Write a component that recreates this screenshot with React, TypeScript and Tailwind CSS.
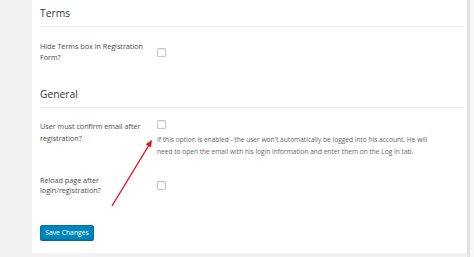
export default function App() {
  return (
    <div
      className="relative flex h-[257px] w-[474px] overflow-hidden bg-[#f1f1f1]"
      style={{ fontFamily: '"Open Sans", "Noto Sans", sans-serif' }}
    >
      <div className="w-[32px] shrink-0" />
      <div className="flex h-[253px] w-[435px] shrink-0 flex-col bg-white pl-[8px] pr-[4px] pt-[6px]">
        <h2 className="text-[10.3px] leading-[14px] text-[#32373c]">Terms</h2>
        <div className="mt-[6px] border-t border-[#e8e8e8]" />

        <div className="mt-[14px] flex">
          <div className="w-[117px] text-[7.2px] leading-[11.4px] text-[#4a4a4a]">
            Hide Terms box in Registration
            <br />
            Form?
          </div>
          <div className="pt-[7px]">
            <Checkbox />
          </div>
        </div>

        <h2 className="mt-[23px] text-[10.3px] leading-[14px] text-[#32373c]">General</h2>
        <div className="mt-[6px] border-t border-[#e8e8e8]" />

        <div className="mt-[12px] flex">
          <div className="w-[117px] text-[7.2px] leading-[12px] text-[#4a4a4a]">
            User must confirm email after
            <br />
            registration?
          </div>
          <div className="flex flex-col">
            <Checkbox />
            <p className="mt-[5px] whitespace-nowrap text-[6.6px] leading-[12.5px] text-[#666]">
              If this option is enabled - the user won't automatically be logged into his account. He will
              <br />
              need to open the email with his login information and enter them on the Log In tab.
            </p>
          </div>
        </div>

        <div className="mt-[16px] flex">
          <div className="w-[117px] text-[7.2px] leading-[10.5px] text-[#4a4a4a]">
            Reload page after
            <br />
            login/registration?
          </div>
          <div className="pt-[6px]">
            <Checkbox />
          </div>
        </div>

        <div className="mt-[21px]">
          <button className="h-[15px] w-[54px] rounded-[2px] border border-[#0073aa] bg-[#0085ba] text-[6.8px] leading-[13px] text-white shadow-[0_1px_0_#006799]">
            Save Changes
          </button>
        </div>
      </div>
      <div className="w-[3px] shrink-0 bg-[#e2e2e2]" />
      <div className="flex-1 bg-[#f7f7f7]" />

      <svg className="pointer-events-none absolute left-0 top-0" width="474" height="257">
        <line x1="112" y1="206" x2="149" y2="145" stroke="#e3131b" strokeWidth="1.4" />
        <polygon points="152,140 151,147.6 145.6,144.3" fill="#e3131b" />
      </svg>
    </div>
  );
}

function Checkbox() {
  return (
    <div className="h-[9px] w-[9px] rounded-[1px] border border-[#c3c6c9] bg-white shadow-[inset_0_1px_1px_rgba(0,0,0,0.08)]" />
  );
}
